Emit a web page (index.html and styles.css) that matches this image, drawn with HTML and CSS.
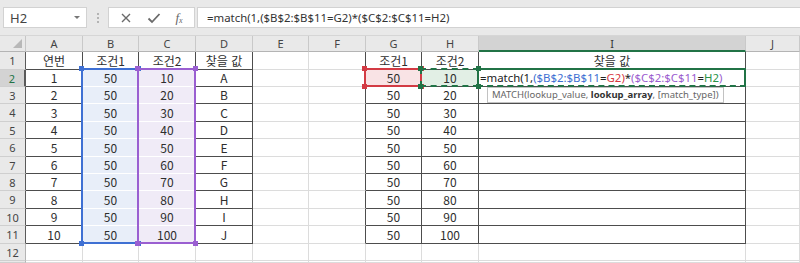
FILE: index.html
```html
<!DOCTYPE html>
<html lang="ko">
<head>
    <meta charset="UTF-8">
    <title>MATCH 다중 조건</title>
    <link rel="stylesheet" href="styles.css">
</head>
<body>
    <div class="fbar">
        <div class="namebox"><span>H2</span><span class="drop"></span></div>
        <div class="grip"><span></span><span></span><span></span></div>
        <div class="fxbox">
            <svg class="ic" width="12" height="12" viewBox="0 0 12 12"><path d="M2 2 L10 10 M10 2 L2 10" stroke="#6a6a6a" stroke-width="1.4" fill="none"/></svg>
            <svg class="ic" width="14" height="12" viewBox="0 0 14 12"><path d="M1.5 6.5 L5 10 L12.5 2" stroke="#6a6a6a" stroke-width="1.8" fill="none"/></svg>
            <span class="fx">f<sub>x</sub></span>
        </div>
        <div class="formula">=match(1,($B$2:$B$11=G2)*($C$2:$C$11=H2)</div>
    </div>

    <div class="stack">
        <div class="sheet">
            <div class="corner"></div>
            <div class="hd">A</div><div class="hd">B</div><div class="hd">C</div><div class="hd">D</div><div class="hd">E</div><div class="hd">F</div><div class="hd">G</div><div class="hd">H</div><div class="hd sel">I</div><div class="hd">J</div>

            <div class="rh tl">1</div><div class="c t">연번</div><div class="c t">조건1</div><div class="c t">조건2</div><div class="c t">찾을 값</div><div class="c"></div><div class="c tl"></div><div class="c t">조건1</div><div class="c t">조건2</div><div class="c t">찾을 값</div><div class="c"></div>

            <div class="rh tl act">2</div><div class="c t">1</div><div class="c t fb">50</div><div class="c t fc">10</div><div class="c t">A</div><div class="c"></div><div class="c tl"></div><div class="c t fr">50</div><div class="c t fg">10</div>
            <div class="c t edit"><span>=match(1,</span><span class="cb">($B$2:$B$11</span>=<span class="cr">G2)</span>*<span class="cp">($C$2:$C$11</span>=<span class="cg">H2</span><span class="cp">)</span>
                <div class="tip">MATCH(lookup_value, <b>lookup_array</b>, [match_type])</div>
            </div><div class="c"></div>

            <div class="rh tl">3</div><div class="c t">2</div><div class="c t fb">50</div><div class="c t fc">20</div><div class="c t">B</div><div class="c"></div><div class="c tl"></div><div class="c t">50</div><div class="c t">20</div><div class="c t"></div><div class="c"></div>
            <div class="rh tl">4</div><div class="c t">3</div><div class="c t fb">50</div><div class="c t fc">30</div><div class="c t">C</div><div class="c"></div><div class="c tl"></div><div class="c t">50</div><div class="c t">30</div><div class="c t"></div><div class="c"></div>
            <div class="rh tl">5</div><div class="c t">4</div><div class="c t fb">50</div><div class="c t fc">40</div><div class="c t">D</div><div class="c"></div><div class="c tl"></div><div class="c t">50</div><div class="c t">40</div><div class="c t"></div><div class="c"></div>
            <div class="rh tl">6</div><div class="c t">5</div><div class="c t fb">50</div><div class="c t fc">50</div><div class="c t">E</div><div class="c"></div><div class="c tl"></div><div class="c t">50</div><div class="c t">50</div><div class="c t"></div><div class="c"></div>
            <div class="rh tl">7</div><div class="c t">6</div><div class="c t fb">50</div><div class="c t fc">60</div><div class="c t">F</div><div class="c"></div><div class="c tl"></div><div class="c t">50</div><div class="c t">60</div><div class="c t"></div><div class="c"></div>
            <div class="rh tl">8</div><div class="c t">7</div><div class="c t fb">50</div><div class="c t fc">70</div><div class="c t">G</div><div class="c"></div><div class="c tl"></div><div class="c t">50</div><div class="c t">70</div><div class="c t"></div><div class="c"></div>
            <div class="rh tl">9</div><div class="c t">8</div><div class="c t fb">50</div><div class="c t fc">80</div><div class="c t">H</div><div class="c"></div><div class="c tl"></div><div class="c t">50</div><div class="c t">80</div><div class="c t"></div><div class="c"></div>
            <div class="rh tl">10</div><div class="c t">9</div><div class="c t fb">50</div><div class="c t fc">90</div><div class="c t">I</div><div class="c"></div><div class="c tl"></div><div class="c t">50</div><div class="c t">90</div><div class="c t"></div><div class="c"></div>
            <div class="rh tl">11</div><div class="c t">10</div><div class="c t fb last">50</div><div class="c t fc last">100</div><div class="c t">J</div><div class="c"></div><div class="c tl"></div><div class="c t">50</div><div class="c t">100</div><div class="c t"></div><div class="c"></div>

            <div class="rh">12</div><div class="c"></div><div class="c"></div><div class="c"></div><div class="c"></div><div class="c"></div><div class="c"></div><div class="c"></div><div class="c"></div><div class="c"></div><div class="c"></div>
            <div class="rh"></div><div class="c"></div><div class="c"></div><div class="c"></div><div class="c"></div><div class="c"></div><div class="c"></div><div class="c"></div><div class="c"></div><div class="c"></div><div class="c"></div>
        </div>

        <!-- range finder frames, same grid as the sheet -->
        <div class="marks">
            <div class="frame blue rng-b"><i class="h tl-h"></i><i class="h tr-h"></i><i class="h bl-h"></i><i class="h br-h"></i></div>
            <div class="frame purple rng-c"><i class="h tl-h"></i><i class="h tr-h"></i><i class="h bl-h"></i><i class="h br-h"></i></div>
            <div class="frame red rng-g"><i class="h tl-h"></i><i class="h tr-h"></i><i class="h bl-h"></i><i class="h br-h"></i></div>
            <div class="frame green dash rng-h"><i class="h tl-h"></i><i class="h tr-h"></i><i class="h bl-h"></i><i class="h br-h"></i></div>
            <div class="frame active rng-i"></div>
        </div>
    </div>
</body>
</html>
```

FILE: styles.css
```css
* {
    box-sizing: border-box;
}

body {
    margin: 0;
    width: 800px;
    height: 263px;
    overflow: hidden;
    background-color: #ffffff;
    font-family: "Noto Sans CJK KR", "Noto Sans", sans-serif;
}

/* formula bar */
.fbar {
    height: 36px;
    background-color: #e9e9e9;
    display: flex;
    align-items: flex-start;
    padding: 7px 0 0 3px;
    border-bottom: 1px solid #d6d6d6;
}

.namebox {
    width: 84px;
    height: 21px;
    background-color: white;
    border: 1px solid #d2d2d2;
    display: flex;
    align-items: center;
    justify-content: space-between;
    padding: 0 6px 0 6px;
    font-family: "Noto Sans", sans-serif;
    font-size: 13px;
    color: #444;
}

.drop {
    width: 0;
    height: 0;
    border-left: 3px solid transparent;
    border-right: 3px solid transparent;
    border-top: 3px solid #777;
}

.grip {
    width: 21px;
    height: 21px;
    display: flex;
    flex-direction: column;
    align-items: center;
    justify-content: center;
    gap: 2px;
}

.grip span {
    width: 2px;
    height: 2px;
    background-color: #b4b4b4;
}

.fxbox {
    width: 87px;
    height: 21px;
    background-color: white;
    border: 1px solid #d2d2d2;
    display: flex;
    align-items: center;
    justify-content: space-around;
    padding: 0 4px;
    margin-right: 2px;
}

.fx {
    font-family: "Liberation Serif", serif;
    font-style: italic;
    font-size: 13px;
    color: #666;
}

.fx sub {
    font-size: 8px;
    vertical-align: -1px;
}

.formula {
    flex: 1;
    height: 21px;
    background-color: white;
    border: 1px solid #d2d2d2;
    border-right: none;
    padding-left: 9px;
    font-family: "Noto Sans", sans-serif;
    font-size: 11.4px;
    line-height: 19px;
    color: #333;
}

/* sheet */
.stack {
    display: grid;
}

.sheet, .marks {
    grid-area: 1 / 1;
    display: grid;
    grid-template-columns: 26px 57px 56px 57px 57px 56px 57px 56px 57px 267px 54px;
    grid-template-rows: 16px 18px 17px 17px 18px 17px 18px 17px 17px 18px 17px 18px 17px 2px;
}

.marks {
    position: relative;
    z-index: 1;
    pointer-events: none;
}

.corner {
    background-color: #e9e9e9;
    border-right: 1px solid #c6c6c6;
    border-bottom: 1px solid #b4b4b4;
    position: relative;
}

.corner::after {
    content: "";
    position: absolute;
    right: 3px;
    bottom: 3px;
    width: 9px;
    height: 9px;
    background-color: #b8b8b8;
    clip-path: polygon(100% 0, 100% 100%, 0 100%);
}

.hd {
    background-color: #e9e9e9;
    border-right: 1px solid #c9c9c9;
    border-bottom: 1px solid #b4b4b4;
    font-family: "Noto Sans", sans-serif;
    font-size: 11px;
    line-height: 1;
    color: #444;
    display: flex;
    align-items: center;
    justify-content: center;
}

.hd.sel {
    background-color: #d3d3d3;
    border-bottom: 2px solid #217346;
    color: #333;
}

.rh {
    background-color: #e9e9e9;
    border-right: 1px solid #b4b4b4;
    border-bottom: 1px solid #cfcfcf;
    font-family: "Noto Sans", sans-serif;
    font-size: 11px;
    line-height: 1;
    color: #444;
    display: flex;
    align-items: center;
    justify-content: center;
}

.rh.act {
    background-color: #d3d3d3;
    border-right: 2px solid #217346;
    color: #217346;
}

.c {
    border-right: 1px solid #dcdcdc;
    border-bottom: 1px solid #dcdcdc;
    font-size: 12px;
    line-height: 1;
    color: #2e2e2e;
    display: flex;
    align-items: center;
    justify-content: center;
    white-space: nowrap;
}

.c.t {
    border-right-color: #4d4d4d;
    border-bottom-color: #4d4d4d;
}

.tl {
    border-right-color: #4d4d4d;
}

.rh.tl {
    border-right-color: #5a5a5a;
}

.fb {
    background-color: #e8eef9;
}

.fc {
    background-color: #f0ebf7;
}

.c.t.fb, .c.t.fc {
    border-bottom-color: #ffffff;
}

.c.t.fb.last, .c.t.fc.last {
    border-bottom-color: #4d4d4d;
}

.fr {
    background-color: #f9e3e5;
}

.fg {
    background-color: #e2efe5;
}

/* cell in edit mode */
.edit {
    justify-content: flex-start;
    padding-left: 1px;
    position: relative;
    font-family: "Noto Sans", sans-serif;
    font-size: 11.4px;
    color: #222;
}

.cb { color: #3d6fd2; }
.cr { color: #d8363e; }
.cp { color: #9b5ccf; }
.cg { color: #2a9146; }

.tip {
    position: absolute;
    left: 8px;
    top: calc(100% + 1px);
    height: 16px;
    padding: 0 4px;
    background-color: white;
    border: 1px solid #c2c2c2;
    font-size: 9.5px;
    line-height: 14px;
    color: #666;
    z-index: 5;
}

.tip b {
    color: #333;
}

/* range finder frames */
.frame {
    margin: -2px 0 0 -2px;
    border: 2px solid;
    position: relative;
}

.rng-b { grid-column: 3; grid-row: 3 / 13; }
.rng-c { grid-column: 4; grid-row: 3 / 13; }
.rng-g { grid-column: 8; grid-row: 3; }
.rng-h { grid-column: 9; grid-row: 3; }
.rng-i { grid-column: 10; grid-row: 3; }

.blue { border-color: #3f70d3; }
.purple { border-color: #9a5fd1; }
.red { border-color: #d33b44; }
.green { border-color: #217346; }
.dash { border-style: dashed; }

.active {
    border-color: #217346;
    border-bottom-style: dashed;
}

.h {
    position: absolute;
    width: 5px;
    height: 5px;
}

.blue .h { background-color: #3f70d3; }
.purple .h { background-color: #9a5fd1; }
.red .h { background-color: #d33b44; }
.green .h { background-color: #217346; }

.tl-h { left: -4px; top: -4px; }
.tr-h { right: -4px; top: -4px; }
.bl-h { left: -4px; bottom: -4px; }
.br-h { right: -4px; bottom: -4px; }
```
